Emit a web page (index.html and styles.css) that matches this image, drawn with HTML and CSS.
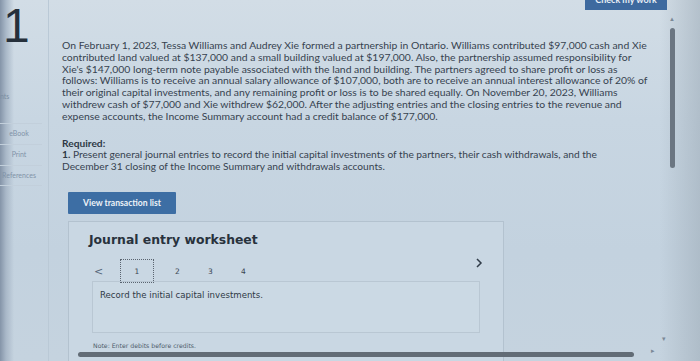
FILE: index.html
```html
<!DOCTYPE html>
<html>
<head>
<meta charset="utf-8">
<link rel="stylesheet" href="styles.css">
</head>
<body>
<div class="page">
  <aside class="side">
    <div class="qnum">1</div>
    <div class="pts">nts</div>
    <nav class="tools">
      <div class="tool">eBook</div>
      <div class="tool">Print</div>
      <div class="tool">References</div>
    </nav>
  </aside>
  <main class="main">
    <div class="topbar"><button class="check">Check my work</button></div>
    <p class="problem">On February 1, 2023, Tessa Williams and Audrey Xie formed a partnership in Ontario. Williams contributed $97,000 cash and Xie<br>contributed land valued at $137,000 and a small building valued at $197,000. Also, the partnership assumed responsibility for<br>Xie's $147,000 long-term note payable associated with the land and building. The partners agreed to share profit or loss as<br>follows: Williams is to receive an annual salary allowance of $107,000, both are to receive an annual interest allowance of 20% of<br>their original capital investments, and any remaining profit or loss is to be shared equally. On November 20, 2023, Williams<br>withdrew cash of $77,000 and Xie withdrew $62,000. After the adjusting entries and the closing entries to the revenue and<br>expense accounts, the Income Summary account had a credit balance of $177,000.</p>
    <div class="required">
      <div class="req-title">Required:</div>
      <p class="req-text"><b>1.</b> Present general journal entries to record the initial capital investments of the partners, their cash withdrawals, and the<br>December 31 closing of the Income Summary and withdrawals accounts.</p>
    </div>
    <button class="view">View transaction list</button>
    <section class="sheet">
      <h2 class="sheet-title">Journal entry worksheet</h2>
      <div class="pager">
        <span class="arrow">&lt;</span>
        <span class="pg active">1</span>
        <span class="pg">2</span>
        <span class="pg">3</span>
        <span class="pg">4</span>
        <span class="spacer"></span>
        <span class="arrow next">
          <svg width="8" height="10" viewBox="0 0 8 10"><path d="M2 1 L6 5 L2 9" fill="none" stroke="#2f3b48" stroke-width="1.5"/></svg>
        </span>
      </div>
      <div class="task">Record the initial capital investments.</div>
      <div class="note">Note: Enter debits before credits.</div>
    </section>
  </main>
</div>
<div class="vscroll"><span class="up">&#9650;</span><span class="vthumb"></span></div>
<div class="hscroll"></div>
<span class="hright">&#9656;</span>
<span class="hdown">&#9662;</span>
</body>
</html>
```

FILE: styles.css
```css
html, body {
  margin: 0;
  padding: 0;
}
body {
  width: 700px;
  height: 361px;
  overflow: hidden;
  position: relative;
  font-family: Lato, "Open Sans", sans-serif;
  color: #36424f;
  background:
    linear-gradient(90deg, #8494a8 0px, #a9b8c8 6px, rgba(200,214,226,0) 14px, rgba(200,214,226,0) 660px, rgba(160,174,186,0.6) 700px),
    linear-gradient(180deg, #d2dde6 0px, #c8d6e2 120px, #c3d2df 250px, #c5d3df 361px);
}
.page {
  display: flex;
  height: 361px;
}
.side {
  width: 48px;
  flex-shrink: 0;
  border-right: 1px solid #bac9d6;
  display: flex;
  flex-direction: column;
}
.qnum {
  font-family: "Liberation Sans", sans-serif;
  font-size: 48px;
  line-height: 48px;
  color: #26303b;
  padding-left: 3px;
  margin-top: 2px;
  height: 50px;
}
.pts {
  font-size: 7px;
  color: #7c8ea2;
  margin-top: 40px;
  margin-left: 0;
}
.tools {
  margin-top: 22px;
  margin-left: -4px;
  width: 46px;
  display: flex;
  flex-direction: column;
}
.tool {
  height: 19px;
  line-height: 19px;
  font-size: 7px;
  color: #8193a8;
  text-align: center;
  border-top: 1px solid #c2cfdb;
  margin-top: 1px;
}
.tool:last-child {
  border-bottom: 1px solid #c2cfdb;
}
.main {
  flex: 1;
  padding-left: 13px;
  display: flex;
  flex-direction: column;
  align-items: flex-start;
}
.topbar {
  width: 100%;
  display: flex;
  justify-content: flex-end;
  padding-right: 33px;
  box-sizing: border-box;
  height: 10px;
  overflow: hidden;
}
.check {
  width: 82px;
  height: 22px;
  margin-top: -12px;
  border: none;
  background: #3e6a9f;
  color: #e8eef5;
  font-family: Lato, sans-serif;
  font-weight: bold;
  font-size: 9px;
  padding: 0;
}
.problem {
  margin: 30px 0 0 0;
  font-size: 10.4px;
  line-height: 11.8px;
  white-space: nowrap;
}
.required {
  margin-top: 15px;
}
.req-title {
  font-weight: bold;
  font-size: 10.2px;
  line-height: 11.5px;
  color: #2e3945;
}
.req-text {
  margin: 0;
  font-size: 10.2px;
  line-height: 11.5px;
  white-space: nowrap;
}
.req-text b {
  color: #2e3945;
}
.view {
  margin-top: 20px;
  margin-left: 6px;
  width: 108px;
  height: 22px;
  border: none;
  border-radius: 1px;
  background: #3d6ea4;
  color: #eef3f8;
  font-family: Lato, sans-serif;
  font-weight: bold;
  font-size: 8.6px;
  padding: 0;
}
.sheet {
  margin-top: 7px;
  margin-left: 6px;
  width: 436px;
  height: 140px;
  box-sizing: border-box;
  border-left: 1px solid #b3c2cf;
  border-top: 1px solid #b3c2cf;
  border-right: 1px solid #b3c2cf;
  background: #c9d7e3;
  padding: 10px 20px 0 20px;
}
.sheet-title {
  margin: 0;
  font-family: "DejaVu Sans", sans-serif;
  font-weight: bold;
  font-size: 12.4px;
  line-height: 16px;
  color: #28323d;
}
.pager {
  display: flex;
  align-items: center;
  height: 26px;
  margin-top: 10px;
  font-family: "DejaVu Sans", sans-serif;
  font-size: 7.5px;
  color: #3a4653;
}
.arrow {
  width: 26px;
  padding-left: 5px;
  font-size: 11px;
  color: #56667a;
}
.arrow.next {
  width: auto;
  padding: 0;
  margin-top: -14px;
}
.pg {
  width: 33px;
  text-align: center;
}
.pg.active {
  width: 34px;
  height: 24px;
  line-height: 24px;
  border: 1px dotted #5a6470;
  box-sizing: border-box;
  margin-right: 7px;
}
.spacer {
  flex: 1;
}
.task {
  margin-left: 3px;
  width: 388px;
  height: 52px;
  box-sizing: border-box;
  border: 1px solid #b9c7d3;
  background: #cbd9e4;
  padding: 8px 7px;
  font-family: "DejaVu Sans", sans-serif;
  font-size: 8.6px;
  color: #2f3a46;
  margin-top: -3px;
}
.note {
  margin-top: 9px;
  margin-left: 4px;
  font-family: "DejaVu Sans", sans-serif;
  font-size: 6.2px;
  color: #4f5d6c;
}
.vscroll {
  position: absolute;
  left: 668px;
  top: 15px;
  width: 8px;
  display: flex;
  flex-direction: column;
  align-items: center;
}
.up {
  font-size: 6px;
  color: #7b8896;
  line-height: 8px;
}
.vthumb {
  margin-top: 5px;
  width: 5px;
  height: 140px;
  border-radius: 3px;
  background: #6b7682;
}
.hscroll {
  position: absolute;
  left: 78px;
  top: 352px;
  width: 556px;
  height: 5px;
  border-radius: 3px;
  background: #626c76;
}
.hright {
  position: absolute;
  left: 651px;
  top: 346px;
  font-size: 7px;
  color: #7b8896;
}
.hdown {
  position: absolute;
  left: 662px;
  top: 334px;
  font-size: 7px;
  color: #7b8896;
}
```
